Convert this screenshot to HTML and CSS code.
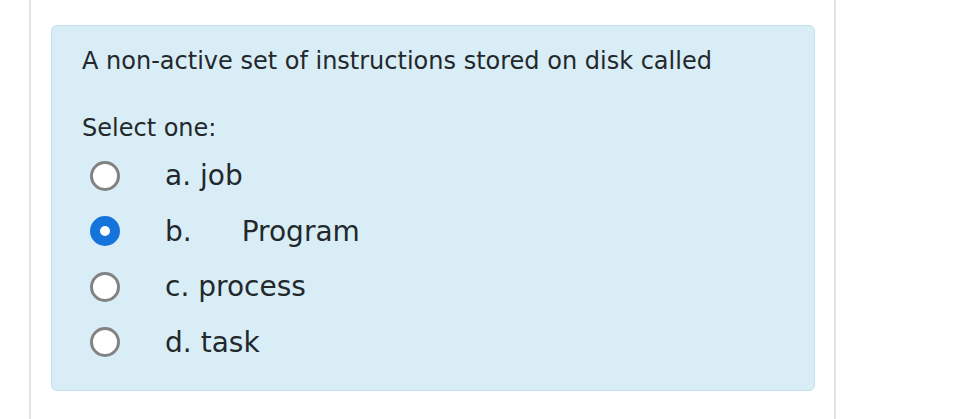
FILE: index.html
```html
<!DOCTYPE html>
<html>
<head>
<meta charset="utf-8">
<link rel="stylesheet" href="styles.css">
</head>
<body>
<div class="page">
  <div class="panel">
    <div class="formulation">
      <div class="qtext">A non-active set of instructions stored on disk called</div>
      <div class="prompt">Select one:</div>
      <div class="answers">
        <div class="opt"><span class="radio"></span><span class="num">a.</span><span class="label">job</span></div>
        <div class="opt"><span class="radio checked"></span><span class="num">b.</span><span class="label wide">Program</span></div>
        <div class="opt"><span class="radio"></span><span class="num">c.</span><span class="label">process</span></div>
        <div class="opt"><span class="radio"></span><span class="num">d.</span><span class="label">task</span></div>
      </div>
    </div>
  </div>
</div>
</body>
</html>
```
FILE: styles.css
```css
html, body {
  margin: 0;
  padding: 0;
  background: #ffffff;
}
body {
  font-family: "DejaVu Sans", Verdana, sans-serif;
  color: #23282c;
}
.page {
  padding-left: 29px;
  height: 419px;
}
.panel {
  width: 807px;
  height: 419px;
  box-sizing: border-box;
  border-left: 2px solid #e3e3e3;
  border-right: 2px solid #e3e3e3;
  padding: 25px 19px 0 20px;
}
.formulation {
  background: #d9edf6;
  border: 1px solid #bfe0ec;
  border-radius: 6px;
  height: 366px;
  box-sizing: border-box;
  padding: 18px 30px 0 30px;
}
.qtext {
  font-size: 24px;
  line-height: 34px;
}
.prompt {
  font-size: 24px;
  line-height: 30px;
  margin-top: 35px;
}
.answers {
  display: flex;
  flex-direction: column;
  margin-top: 5px;
}
.opt {
  display: flex;
  align-items: center;
  height: 55.5px;
  font-size: 28px;
}
.radio {
  width: 30px;
  height: 30px;
  box-sizing: border-box;
  border-radius: 50%;
  border: 3px solid #828282;
  background: #ffffff;
  margin-left: 8px;
  margin-right: 45px;
  flex: none;
}
.radio.checked {
  border: 10px solid #1574dc;
}
.num {
  margin-right: 9px;
}
.label.wide {
  margin-left: 41px;
}
```
